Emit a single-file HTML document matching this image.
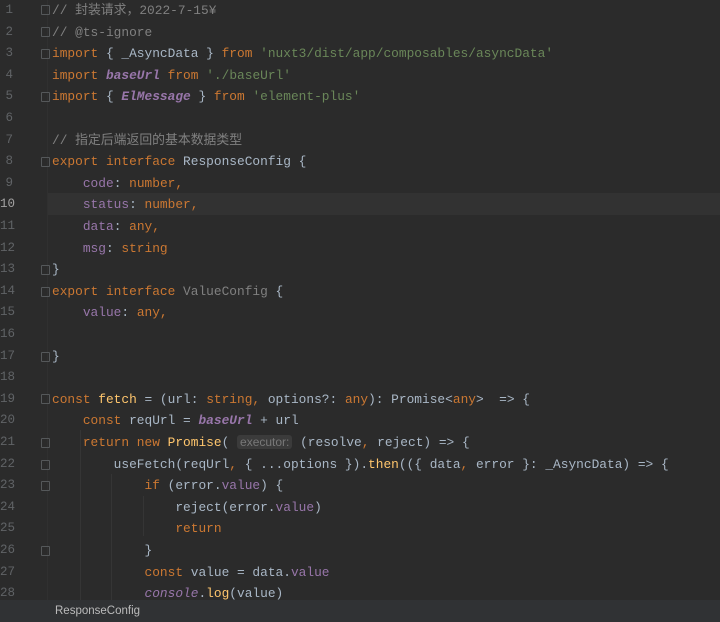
<!DOCTYPE html>
<html><head><meta charset="utf-8"><style>
html,body{margin:0;padding:0;}
body{width:720px;height:622px;background:#2b2b2b;position:relative;overflow:hidden;font-family:"Liberation Mono","Noto Sans CJK SC",monospace;font-size:12.85px;color:#a9b7c6;}
.ln{position:absolute;left:0;width:13px;text-align:right;color:#606366;font-size:12.5px;}
.l{position:absolute;left:52px;white-space:pre;height:21.6px;line-height:21.6px;}
.hl{position:absolute;left:47px;width:673px;height:21.6px;background:#323232;}
.k{color:#cc7832}.s{color:#6a8759}.p{color:#9876aa}.pi{color:#9876aa;font-style:italic;font-weight:bold}.f{color:#ffc66d}.c{color:#808080}.g{color:#808080}
.hint{background:#3b3b3b;color:#787878;font-family:"Liberation Sans",sans-serif;font-size:12px;border-radius:3px;padding:0 3px;}
.fold{position:absolute;left:41px;width:7px;height:8px;border:1px solid #55585a;border-radius:1px;}
.guide{position:absolute;width:1px;background:#353535;}
.bar{position:absolute;left:0;top:600px;width:720px;height:22px;background:#303234;color:#bbbbbb;font-family:"Liberation Sans",sans-serif;font-size:11.5px;line-height:22px;}
</style></head><body>
<div class="hl" style="top:193px"></div>
<div class="guide" style="left:47px;top:0;height:600px;background:#303030"></div>
<div class="guide" style="left:80px;top:430px;height:170px"></div>
<div class="guide" style="left:111px;top:474px;height:126px"></div>
<div class="guide" style="left:143px;top:496px;height:40px"></div>
<div class="fold" style="top:5px"></div><div class="fold" style="top:27px"></div><div class="fold" style="top:49px"></div><div class="fold" style="top:92px"></div><div class="fold" style="top:157px"></div><div class="fold" style="top:265px"></div><div class="fold" style="top:287px"></div><div class="fold" style="top:352px"></div><div class="fold" style="top:394px"></div><div class="fold" style="top:438px"></div><div class="fold" style="top:460px"></div><div class="fold" style="top:481px"></div><div class="fold" style="top:546px"></div>
<div id="c"></div>
<script>
var L=[
'<span class="c">// 封装请求，2022-7-15¥</span>',
'<span class="c">// @ts-ignore</span>',
'<span class="k">import</span> { _AsyncData } <span class="k">from</span> <span class="s">\'nuxt3/dist/app/composables/asyncData\'</span>',
'<span class="k">import</span> <span class="pi">baseUrl</span> <span class="k">from</span> <span class="s">\'./baseUrl\'</span>',
'<span class="k">import</span> { <span class="pi">ElMessage</span> } <span class="k">from</span> <span class="s">\'element-plus\'</span>',
'',
'<span class="c">// 指定后端返回的基本数据类型</span>',
'<span class="k">export interface</span> ResponseConfig {',
'    <span class="p">code</span>: <span class="k">number,</span>',
'    <span class="p">status</span>: <span class="k">number,</span>',
'    <span class="p">data</span>: <span class="k">any,</span>',
'    <span class="p">msg</span>: <span class="k">string</span>',
'}',
'<span class="k">export interface</span> <span class="g">ValueConfig</span> {',
'    <span class="p">value</span>: <span class="k">any,</span>',
'',
'}',
'',
'<span class="k">const</span> <span class="f">fetch</span> = (url: <span class="k">string,</span> options?: <span class="k">any</span>): Promise&lt;<span class="k">any</span>&gt;  =&gt; {',
'    <span class="k">const</span> reqUrl = <span class="pi">baseUrl</span> + url',
'    <span class="k">return new</span> <span class="f">Promise</span>( <span class="hint">executor:</span> (resolve<span class="k">,</span> reject) =&gt; {',
'        useFetch(reqUrl<span class="k">,</span> { ...options }).<span class="f">then</span>(({ data<span class="k">,</span> error }: _AsyncData) =&gt; {',
'            <span class="k">if</span> (error.<span class="p">value</span>) {',
'                reject(error.<span class="p">value</span>)',
'                <span class="k">return</span>',
'            }',
'            <span class="k">const</span> value = data.<span class="p">value</span>',
'            <span class="pi" style="font-weight:normal">console</span>.<span class="f">log</span>(value)'
];
var h='';
for(var i=0;i<L.length;i++){var t=i*21.6;
h+='<div class="ln" style="top:'+t+'px;line-height:21.6px;'+(i==9?'color:#a4a3a3':'')+'">'+(i+1)+'</div>';
h+='<div class="l" style="top:'+t+'px">'+L[i]+'</div>';}
document.getElementById('c').innerHTML=h;
</script>
<div class="bar"><span style="position:absolute;left:55px">ResponseConfig</span></div>
</body></html>
